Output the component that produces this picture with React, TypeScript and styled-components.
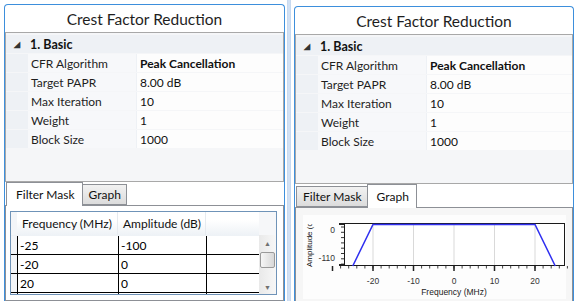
import React from 'react';
import styled, { createGlobalStyle } from 'styled-components';

const GlobalStyle = createGlobalStyle`
  html, body {
    margin: 0;
    padding: 0;
    background: #ffffff;
    font-family: Lato, "Noto Sans", "Liberation Sans", sans-serif;
    color: #000;
  }
  #root {
    height: 301px;
    overflow: hidden;
  }
`;

const Page = styled.div`
  display: flex;
  height: 301px;
  overflow: hidden;
  padding-left: 4px;
`;

const Panel = styled.div<{ $top: number; $width: number }>`
  box-sizing: border-box;
  margin-top: ${(p) => p.$top}px;
  width: ${(p) => p.$width}px;
  height: 320px;
  border: 1px solid #3d8fdc;
  border-bottom: none;
  border-radius: 4px 4px 0 0;
  display: flex;
  flex-direction: column;
  background: #fff;
`;

const Divider = styled.div`
  width: 4px;
  margin: 0 3px 0 2px;
  background: linear-gradient(to right, #c2d6ef 0, #d6e4f5 50%, #c2d6ef 100%);
`;

const Title = styled.div`
  height: 27px;
  display: flex;
  align-items: center;
  justify-content: center;
  font-size: 15.5px;
  color: #1e1e1e;
  padding-top: 1px;
  box-sizing: border-box;
`;

const PropGrid = styled.div`
  height: 146px;
  border: 1px solid #a8a8a8;
  background: #f5f6f8;
  padding-top: 2px;
  display: flex;
  flex-direction: column;
  gap: 1px;
  font-size: 12px;
`;

const CategoryRow = styled.div`
  height: 18px;
  display: flex;
  align-items: center;
  background: #eef1f5;
  font-weight: 700;
  font-size: 12.5px;
  color: #111;
`;

const Expander = styled.span`
  width: 24px;
  display: flex;
  justify-content: center;
  font-size: 8px;
  color: #333;
  transform: translateX(-1px);
`;

const PropRow = styled.div`
  height: 18px;
  display: grid;
  grid-template-columns: 21px 108px 1fr;
  column-gap: 1px;
  background: #eef1f5;
`;

const LabelCell = styled.div`
  display: flex;
  align-items: center;
  padding-left: 3px;
  background: #f7f8fa;
  color: #1e1e1e;
`;

const ValueCell = styled.div<{ $bold?: boolean }>`
  display: flex;
  align-items: center;
  padding-left: 3px;
  background: #fdfdfd;
  font-weight: ${(p) => (p.$bold ? 700 : 400)};
  color: #111;
`;

const TabArea = styled.div`
  display: flex;
  flex-direction: column;
  background: #fff;
`;

const TabStrip = styled.div`
  height: 23px;
  display: flex;
  align-items: flex-end;
  padding-left: 1px;
  position: relative;
  z-index: 1;
`;

const Tab = styled.div<{ $active?: boolean }>`
  box-sizing: border-box;
  height: ${(p) => (p.$active ? 24 : 21)}px;
  margin-bottom: ${(p) => (p.$active ? -1 : 0)}px;
  padding: 0 ${(p) => (p.$active ? 7 : 5)}px 0 ${(p) => (p.$active ? 9 : 6)}px;
  display: flex;
  align-items: center;
  font-size: 12px;
  color: #111;
  border: 1px solid #8d9096;
  border-bottom: ${(p) => (p.$active ? 'none' : '1px solid #8d9096')};
  background: ${(p) => (p.$active ? '#ffffff' : 'linear-gradient(#f2f2f2, #dcdcdc)')};
  & + & {
    margin-left: -1px;
  }
`;

const TabContent = styled.div<{ $bg: string }>`
  box-sizing: border-box;
  height: 96px;
  border: 1px solid #8d9096;
  background: ${(p) => p.$bg};
  padding: 5px 4px;
`;

const DataGrid = styled.div`
  box-sizing: border-box;
  width: 267px;
  height: 84px;
  border: 1px solid #6f93b8;
  display: grid;
  grid-template-columns: 1fr 17px;
  grid-template-rows: minmax(0, 1fr);
  overflow: hidden;
  background: #fff;
  font-size: 12px;
`;

const GridBody = styled.div`
  display: flex;
  flex-direction: column;
  overflow: hidden;
  min-height: 0;
`;

const HeaderRow = styled.div`
  flex: none;
  height: 23px;
  display: grid;
  grid-template-columns: 6px 101px 88px 1fr;
  background: linear-gradient(#ffffff 0, #ffffff 35%, #eef2f6 100%);
  border-bottom: 1px solid #eef2f6;
`;

const HeaderCell = styled.div`
  display: flex;
  align-items: center;
  padding-left: 5px;
  border-right: 1px solid #e6eaef;
  color: #111;
`;

const DataRow = styled.div`
  flex: none;
  height: 18px;
  display: grid;
  grid-template-columns: 6px 101px 88px 1fr;
  border-bottom: 1px solid #000;
`;

const DataCell = styled.div`
  display: flex;
  align-items: center;
  padding-left: 2px;
  border-left: 1px solid #000;
  color: #000;
`;

const RowHeader = styled.div`
  background: #f3f5f8;
`;

const ScrollBar = styled.div`
  display: flex;
  flex-direction: column;
  align-items: center;
  background: linear-gradient(to right, #e9e9e9, #f7f7f7);
`;

const ScrollHead = styled.div`
  height: 23px;
  align-self: stretch;
  background: #f6f7f9;
`;

const Arrow = styled.div`
  height: 15px;
  display: flex;
  align-items: center;
  justify-content: center;
  font-size: 7px;
  color: #707070;
`;

const Thumb = styled.div`
  box-sizing: border-box;
  width: 15px;
  height: 16px;
  margin: 2px 0 auto;
  border: 1px solid #9a9a9a;
  border-radius: 2px;
  background: linear-gradient(to right, #f6f6f6, #d8d8d8);
`;

const ChartBox = styled.div`
  margin: 2px 0 0 2px;
`;

const properties = [
  { label: 'CFR Algorithm', value: 'Peak Cancellation', bold: true },
  { label: 'Target PAPR', value: '8.00 dB' },
  { label: 'Max Iteration', value: '10' },
  { label: 'Weight', value: '1' },
  { label: 'Block Size', value: '1000' },
];

const maskRows = [
  ['-25', '-100'],
  ['-20', '0'],
  ['20', '0'],
  ['', ''],
];

function PropertyGrid() {
  return (
    <PropGrid>
      <CategoryRow>
        <Expander>◢</Expander>
        1. Basic
      </CategoryRow>
      {properties.map((p) => (
        <PropRow key={p.label}>
          <span />
          <LabelCell>{p.label}</LabelCell>
          <ValueCell $bold={p.bold}>{p.value}</ValueCell>
        </PropRow>
      ))}
    </PropGrid>
  );
}

function MaskGrid() {
  return (
    <DataGrid>
      <GridBody>
        <HeaderRow>
          <RowHeader />
          <HeaderCell>Frequency (MHz)</HeaderCell>
          <HeaderCell>Amplitude (dB)</HeaderCell>
          <span />
        </HeaderRow>
        {maskRows.map((r, i) => (
          <DataRow key={i}>
            <RowHeader />
            <DataCell>{r[0]}</DataCell>
            <DataCell>{r[1]}</DataCell>
            <DataCell />
          </DataRow>
        ))}
      </GridBody>
      <ScrollBar>
        <ScrollHead />
        <Arrow>▲</Arrow>
        <Thumb />
        <Arrow>▼</Arrow>
      </ScrollBar>
    </DataGrid>
  );
}

// chart drawn in local coords; plot box spans x 42..263, y 8..51
function MaskChart() {
  const x0 = 42;
  const x1 = 263;
  const yTop = 8;
  const yBot = 51;
  const cx = 152;
  const scale = 4.05;
  const fx = (f: number) => cx + f * scale;
  const majors = [-30, -20, -10, 0, 10, 20, 30];
  const minors: number[] = [];
  for (let f = -28; f <= 28; f += 2) minors.push(f);
  const yMinor: number[] = [];
  for (let y = yTop + 4; y < yBot; y += 5.3) yMinor.push(y);
  return (
    <ChartBox>
      <svg width="266" height="84" viewBox="0 0 266 84">
        <defs>
          <clipPath id="xlab">
            <rect x={x0 - 1} y="0" width={x1 - x0 + 3} height="86" />
          </clipPath>
          <clipPath id="ylab">
            <rect x="0" y={yTop + 1} width="30" height="80" />
          </clipPath>
        </defs>
        <rect x="1" y="0" width="263" height="84" fill="#fdfdfd" />
        <rect x={x0} y={yTop} width={x1 - x0} height={yBot - yTop} fill="#fff" />
        {[-20, -10, 0, 10, 20].map((f) => (
          <line key={f} x1={fx(f)} x2={fx(f)} y1={yTop} y2={yBot} stroke="#d9d9d9" />
        ))}
        <rect x={x0 + 0.5} y={yTop + 0.5} width={x1 - x0 - 1} height={yBot - yTop - 1} fill="none" stroke="#1a1a1a" />
        <polyline
          points={`${fx(-25)},${yBot} ${fx(-20)},${yTop + 1.5} ${fx(20)},${yTop + 1.5} ${fx(25)},${yBot}`}
          fill="none"
          stroke="#2f2ff0"
          strokeWidth="1.5"
        />
        {yMinor.map((y, i) => (
          <line key={i} x1={x0 - 3} x2={x0} y1={y} y2={y} stroke="#333" />
        ))}
        <line x1={x0 - 5} x2={x0} y1={yTop + 1} y2={yTop + 1} stroke="#222" strokeWidth="2" />
        <line x1={x0 - 5} x2={x0} y1={yBot - 1} y2={yBot - 1} stroke="#222" strokeWidth="2" />
        {minors.map((f) => (
          <line key={f} x1={fx(f)} x2={fx(f)} y1={yBot} y2={yBot + 2.5} stroke="#444" />
        ))}
        {majors.map((f) => (
          <line key={f} x1={fx(f)} x2={fx(f)} y1={yBot} y2={yBot + 5} stroke="#222" strokeWidth="1.5" />
        ))}
        <g fontFamily='"Liberation Sans", Arial, sans-serif' fontSize="8.5" fill="#333">
          <text x="33" y="18" textAnchor="end">0</text>
          <text x="33" y="46" textAnchor="end">-110</text>
          <g clipPath="url(#xlab)">
            {majors.map((f) => (
              <text key={f} x={fx(f)} y="69" textAnchor="middle">{f}</text>
            ))}
          </g>
          <text x={cx} y="80" textAnchor="middle" fill="#222">Frequency (MHz)</text>
          <g clipPath="url(#ylab)">
            <text x="0" y="0" transform="translate(10 52) rotate(-90)" fill="#111" fontSize="8">Amplitude (dB)</text>
          </g>
        </g>
      </svg>
    </ChartBox>
  );
}

export default function App() {
  return (
    <>
      <GlobalStyle />
      <Page>
        <Panel $top={4} $width={281}>
          <Title>Crest Factor Reduction</Title>
          <PropertyGrid />
          <TabArea>
            <TabStrip>
              <Tab $active>Filter Mask</Tab>
              <Tab>Graph</Tab>
            </TabStrip>
            <TabContent $bg="#ffffff">
              <MaskGrid />
            </TabContent>
          </TabArea>
        </Panel>
        <Divider />
        <Panel $top={6} $width={280}>
          <Title>Crest Factor Reduction</Title>
          <PropertyGrid />
          <TabArea>
            <TabStrip>
              <Tab>Filter Mask</Tab>
              <Tab $active>Graph</Tab>
            </TabStrip>
            <TabContent $bg="#f6f6f6">
              <MaskChart />
            </TabContent>
          </TabArea>
        </Panel>
      </Page>
    </>
  );
}
